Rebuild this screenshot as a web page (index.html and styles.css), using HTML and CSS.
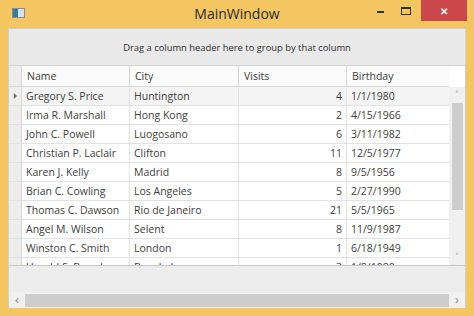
FILE: index.html
```html
<!DOCTYPE html>
<html lang="en">
<head>
  <meta charset="UTF-8" />
  <title>MainWindow</title>
  <link rel="stylesheet" href="styles.css">
</head>
<body>
  <div class="titlebar">
    <div class="app-icon"><span class="icon-left"></span><span class="icon-right"></span></div>
    <div class="title">MainWindow</div>
    <div class="controls">
      <div class="btn min"><span></span></div>
      <div class="btn max"><span></span></div>
      <div class="btn close">&#x2715;</div>
    </div>
  </div>

  <div class="client">
    <div class="group-panel">Drag a column header here to group by that column</div>

    <div class="grid">
      <div class="table">
        <div class="row head">
          <div class="cell rh"></div>
          <div class="cell">Name</div>
          <div class="cell">City</div>
          <div class="cell">Visits</div>
          <div class="cell">Birthday</div>
          <div class="cell corner"></div>
        </div>
        <div class="body">
          <div class="row current">
            <div class="cell rh"><span class="arrow"></span></div>
            <div class="cell">Gregory S. Price</div>
            <div class="cell">Huntington</div>
            <div class="cell num">4</div>
            <div class="cell">1/1/1980</div>
          </div>
          <div class="row">
            <div class="cell rh"></div>
            <div class="cell">Irma R. Marshall</div>
            <div class="cell">Hong Kong</div>
            <div class="cell num">2</div>
            <div class="cell">4/15/1966</div>
          </div>
          <div class="row">
            <div class="cell rh"></div>
            <div class="cell">John C. Powell</div>
            <div class="cell">Luogosano</div>
            <div class="cell num">6</div>
            <div class="cell">3/11/1982</div>
          </div>
          <div class="row">
            <div class="cell rh"></div>
            <div class="cell">Christian P. Laclair</div>
            <div class="cell">Clifton</div>
            <div class="cell num">11</div>
            <div class="cell">12/5/1977</div>
          </div>
          <div class="row">
            <div class="cell rh"></div>
            <div class="cell">Karen J. Kelly</div>
            <div class="cell">Madrid</div>
            <div class="cell num">8</div>
            <div class="cell">9/5/1956</div>
          </div>
          <div class="row">
            <div class="cell rh"></div>
            <div class="cell">Brian C. Cowling</div>
            <div class="cell">Los Angeles</div>
            <div class="cell num">5</div>
            <div class="cell">2/27/1990</div>
          </div>
          <div class="row">
            <div class="cell rh"></div>
            <div class="cell">Thomas C. Dawson</div>
            <div class="cell">Rio de Janeiro</div>
            <div class="cell num">21</div>
            <div class="cell">5/5/1965</div>
          </div>
          <div class="row">
            <div class="cell rh"></div>
            <div class="cell">Angel M. Wilson</div>
            <div class="cell">Selent</div>
            <div class="cell num">8</div>
            <div class="cell">11/9/1987</div>
          </div>
          <div class="row">
            <div class="cell rh"></div>
            <div class="cell">Winston C. Smith</div>
            <div class="cell">London</div>
            <div class="cell num">1</div>
            <div class="cell">6/18/1949</div>
          </div>
          <div class="row">
            <div class="cell rh"></div>
            <div class="cell">Harold S. Brandes</div>
            <div class="cell">Bangkok</div>
            <div class="cell num">3</div>
            <div class="cell">1/8/1980</div>
          </div>
        </div>
      </div>
      <div class="vscroll">
        <div class="sb-arrow">&#x2C4;</div>
        <div class="vtrack"><div class="vthumb"></div></div>
        <div class="sb-arrow">&#x2C5;</div>
      </div>
    </div>

    <div class="spacer"></div>

    <div class="hscroll">
      <div class="sb-arrow">&lsaquo;</div>
      <div class="hthumb"></div>
      <div class="sb-arrow">&rsaquo;</div>
    </div>
  </div>
</body>
</html>
```

FILE: styles.css
```css
body {
  margin: 0;
  width: 474px;
  height: 316px;
  overflow: hidden;
  background: #f3c662;
  font-family: "Open Sans", "Noto Sans", sans-serif;
  color: #3d3d3d;
}

/* title bar */
.titlebar {
  height: 28px;
  display: flex;
  align-items: center;
  position: relative;
}
.app-icon {
  width: 11px;
  height: 8px;
  margin-left: 12px;
  margin-top: -2px;
  display: flex;
  border: 1px solid #8a8a8a;
  background: #fff;
}
.icon-left {
  width: 5px;
  background: #2c7fa4;
}
.icon-right {
  flex: 1;
  background: #d8e2ea;
}
.title {
  position: absolute;
  left: 0;
  right: 0;
  top: 4px;
  text-align: center;
  font-size: 14px;
  color: #2b2b2b;
}
.controls {
  margin-left: auto;
  margin-right: 7px;
  align-self: flex-start;
  display: flex;
}
.btn {
  width: 25px;
  height: 21px;
  display: flex;
  align-items: center;
  justify-content: center;
}
.min span {
  width: 7px;
  height: 2px;
  margin-top: 3px;
  background: #333;
}
.max span {
  width: 8px;
  height: 5px;
  border: 1px solid #333;
  border-top-width: 2px;
}
.close {
  width: 46px;
  margin-left: 3px;
  background: #c9474a;
  color: #fff;
  font-size: 10px;
  font-weight: bold;
}

/* client area */
.client {
  margin: 0 8px;
  height: 280px;
  background: #ececec;
  border: 1px solid #cfcfcf;
  border-bottom: none;
  box-sizing: border-box;
  display: flex;
  flex-direction: column;
}
.group-panel {
  height: 37px;
  display: flex;
  align-items: center;
  justify-content: center;
  font-size: 9.4px;
  color: #2e2e2e;
  background: #e9e9e9;
  border-bottom: 1px solid #d4d4d4;
  box-sizing: border-box;
}

.grid {
  height: 199px;
  display: flex;
  background: #fff;
  border-bottom: 1px solid #c8c8c8;
  overflow: hidden;
}
.table {
  flex: 1;
  display: flex;
  flex-direction: column;
  overflow: hidden;
}
.row {
  display: grid;
  grid-template-columns: 13px 108px 109px 108px 103px 16px;
  height: 19px;
  flex: none;
}
.body .row {
  grid-template-columns: 13px 108px 109px 108px 103px;
}
.cell {
  font-size: 10.5px;
  line-height: 19px;
  padding-left: 4px;
  border-right: 1px solid #e2e2e2;
  border-bottom: 1px solid #e2e2e2;
  white-space: nowrap;
  overflow: hidden;
}
.head {
  height: 21px;
}
.head .cell {
  line-height: 21px;
  padding-left: 5px;
  background: #fafafa;
  border-right-color: #d6d6d6;
  border-bottom-color: #d6d6d6;
}
.head .corner {
  border-right: none;
}
.cell.rh {
  padding: 0;
  background: #ededed;
  border-right-color: #d6d6d6;
  display: flex;
  align-items: center;
  justify-content: center;
}
.cell.num {
  text-align: right;
  padding-left: 0;
  padding-right: 4px;
}
.current .cell {
  background: #f4f4f4;
}
.current .cell.rh {
  background: #ededed;
}
.arrow {
  width: 0;
  height: 0;
  border-top: 3px solid transparent;
  border-bottom: 3px solid transparent;
  border-left: 3px solid #6d6d6d;
}

/* scrollbars */
.vscroll {
  width: 16px;
  margin-top: 21px;
  background: #f0f0f0;
  display: flex;
  flex-direction: column;
  align-items: center;
}
.sb-arrow {
  font-size: 11px;
  line-height: 16px;
  height: 16px;
  color: #8a8a8a;
  text-align: center;
  width: 16px;
}
.vtrack {
  flex: 1;
  width: 100%;
  display: flex;
  justify-content: center;
}
.vthumb {
  width: 11px;
  height: 107px;
  background: #cdcdcd;
}
.spacer {
  flex: 1;
}
.hscroll {
  height: 16px;
  background: #f0f0f0;
  display: flex;
  align-items: center;
}
.hscroll .sb-arrow {
  font-size: 13px;
  line-height: 14px;
}
.hthumb {
  flex: 1;
  height: 13px;
  background: #cdcdcd;
}
```
